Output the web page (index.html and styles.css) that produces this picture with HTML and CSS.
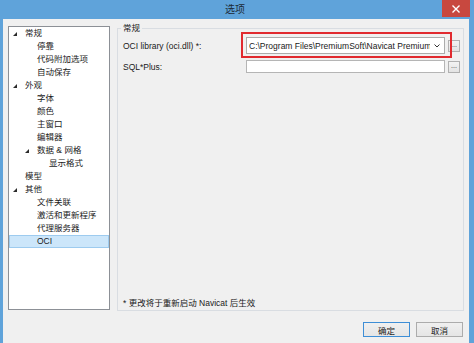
FILE: index.html
```html
<!DOCTYPE html>
<html lang="zh-CN">
<head>
  <meta charset="UTF-8">
  <title>选项</title>
  <link rel="stylesheet" href="styles.css">
</head>
<body>

<div class="window">
  <div class="titlebar">
    <span></span>
    <span class="title">选项</span>
    <button class="close">
      <svg width="8" height="8" viewBox="0 0 8 8"><path d="M0.5 0.5L7.5 7.5M7.5 0.5L0.5 7.5" stroke="#fff" stroke-width="1.4"/></svg>
    </button>
  </div>

  <div class="client">
    <div class="main">
      <ul class="tree">
        <li class="node lv0"><i class="twisty"><svg width="4" height="4" viewBox="0 0 4 4"><polygon points="4,0 4,4 0,4"/></svg></i>常规</li>
        <li class="node lv1"><i class="twisty"></i>停靠</li>
        <li class="node lv1"><i class="twisty"></i>代码附加选项</li>
        <li class="node lv1"><i class="twisty"></i>自动保存</li>
        <li class="node lv0"><i class="twisty"><svg width="4" height="4" viewBox="0 0 4 4"><polygon points="4,0 4,4 0,4"/></svg></i>外观</li>
        <li class="node lv1"><i class="twisty"></i>字体</li>
        <li class="node lv1"><i class="twisty"></i>颜色</li>
        <li class="node lv1"><i class="twisty"></i>主窗口</li>
        <li class="node lv1"><i class="twisty"></i>编辑器</li>
        <li class="node lv1"><i class="twisty"><svg width="4" height="4" viewBox="0 0 4 4"><polygon points="4,0 4,4 0,4"/></svg></i>数据 &amp; 网格</li>
        <li class="node lv2"><i class="twisty"></i>显示格式</li>
        <li class="node lv0"><i class="twisty"></i>模型</li>
        <li class="node lv0"><i class="twisty"><svg width="4" height="4" viewBox="0 0 4 4"><polygon points="4,0 4,4 0,4"/></svg></i>其他</li>
        <li class="node lv1"><i class="twisty"></i>文件关联</li>
        <li class="node lv1"><i class="twisty"></i>激活和更新程序</li>
        <li class="node lv1"><i class="twisty"></i>代理服务器</li>
        <li class="node lv1 selected"><i class="twisty"></i>OCI</li>
      </ul>

      <fieldset class="group">
        <legend>常规</legend>
        <div class="form">
          <label>OCI library (oci.dll) *:</label>
          <div class="combo">
            <span class="combo-text">C:\Program Files\PremiumSoft\Navicat Premium\instantclient</span>
            <svg class="chevron" width="6" height="4" viewBox="0 0 6 4"><path d="M0.5 0.5L3 3L5.5 0.5" fill="none" stroke="#333" stroke-width="1"/></svg>
            <span class="mark"></span>
          </div>
          <button class="browse">...</button>

          <label>SQL*Plus:</label>
          <input class="text" type="text">
          <button class="browse">...</button>
        </div>
        <p class="note">* 更改将于重新启动 Navicat 后生效</p>
      </fieldset>
    </div>

    <div class="actions">
      <button class="btn default">确定</button>
      <button class="btn">取消</button>
    </div>
  </div>
</div>

</body>
</html>
```

FILE: styles.css
```css
* { box-sizing: border-box; }

body {
  margin: 0;
  font-family: "Liberation Sans", "Noto Sans CJK SC", sans-serif;
  font-size: 8.5px;
  color: #1a1a1a;
}

.window {
  height: 100vh;
  display: flex;
  flex-direction: column;
  background: #5fa3da;
}

/* title bar */
.titlebar {
  height: 19px;
  display: grid;
  grid-template-columns: 1fr auto 1fr;
  align-items: start;
  padding-right: 4px;
}

.title {
  font-size: 10px;
  line-height: 19px;
  color: #1c2a36;
}

.close {
  justify-self: end;
  width: 28px;
  height: 17px;
  border: none;
  padding: 0;
  background: #c8483f;
  display: flex;
  align-items: center;
  justify-content: center;
}

/* client area */
.client {
  flex: 1;
  margin: 0 5px 0 3px;
  background: #f0f0f0;
  padding: 3px 5px 0 5px;
}

.main {
  height: 289px;
  display: flex;
}

/* tree */
.tree {
  list-style: none;
  margin: 4px 0 0 0;
  padding: 0;
  width: 102px;
  height: 284px;
  background: #fff;
  border: 1px solid #8c9096;
}

.node {
  height: 13px;
  line-height: 13px;
  display: flex;
  align-items: center;
  white-space: nowrap;
}

.lv0 { padding-left: 4px; }
.lv1 { padding-left: 16px; }
.lv2 { padding-left: 28px; }

.twisty {
  width: 12px;
  height: 13px;
  display: flex;
  align-items: center;
  flex-shrink: 0;
}

.twisty svg { fill: #2b2b2b; margin-top: 1px; }

.node.selected {
  background: #cce6fa;
  border: 1px solid #9dcbef;
  padding-left: 15px;
}

/* group box */
.group {
  flex: 1;
  margin: 0 0 0 7px;
  min-width: 0;
  border: 1px solid #d9dde2;
  padding: 3px 3px 1px 5px;
  display: flex;
  flex-direction: column;
}

.group legend {
  padding: 0 2px;
  margin-left: -2px;
  line-height: 12px;
}

.form {
  display: grid;
  grid-template-columns: 123px 199px 15px;
  grid-template-rows: 17px 13px;
  row-gap: 6px;
  align-items: center;
}

.combo {
  position: relative;
  height: 17px;
  background: #fff;
  border: 1px solid #acacac;
  display: flex;
  align-items: center;
  padding-left: 2px;
}

.combo-text {
  flex: 1;
  overflow: hidden;
  white-space: nowrap;
}

.chevron { margin: 0 4px 0 4px; }

.mark {
  position: absolute;
  top: -6px;
  left: -6px;
  right: -8px;
  bottom: -5px;
  border: 2px solid #e12a2f;
  z-index: 1;
}

.text {
  height: 13px;
  margin: 0;
  border: 1px solid #b5b5b5;
  background: #fff;
}

.browse {
  justify-self: end;
  width: 12px;
  height: 12px;
  padding: 0 0 2px 0;
  margin: 0;
  border: 1px solid #b0b0b0;
  background: linear-gradient(#f3f3f3, #e3e3e3);
  font-family: inherit;
  font-size: 7px;
  line-height: 8px;
  color: #333;
}

.note {
  margin: auto 0 0 0;
  line-height: 12px;
}

/* dialog buttons */
.actions {
  display: flex;
  justify-content: flex-end;
  gap: 6px;
  margin-top: 11px;
  padding-right: 1px;
}

.btn {
  width: 47px;
  height: 15px;
  padding: 0;
  border: 1px solid #acacac;
  background: linear-gradient(#f0f0f0, #e5e5e5);
  font-family: inherit;
  font-size: 8.5px;
  color: #1a1a1a;
}

.btn.default {
  border-color: #3e8ed6;
}
```
